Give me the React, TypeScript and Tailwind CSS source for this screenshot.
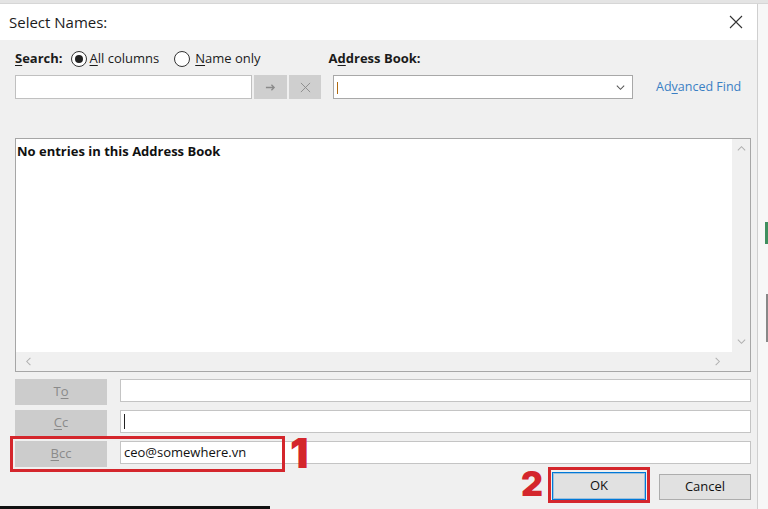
const ui = { fontFamily: '"Open Sans", "Noto Sans", sans-serif' };
const digit = { fontFamily: "Inter, Lato, sans-serif" };

const Chevron = ({ dir, className }: { dir: "up" | "down" | "left" | "right"; className?: string }) => {
  const d = {
    up: "M2 7 L6 3 L10 7",
    down: "M2 4 L6 8 L10 4",
    left: "M7 2 L3 6 L7 10",
    right: "M4 2 L8 6 L4 10",
  }[dir];
  return (
    <svg viewBox="0 0 12 12" className={className} fill="none" stroke="currentColor" strokeWidth="1.1">
      <path d={d} />
    </svg>
  );
};

const Radio = ({ checked }: { checked?: boolean }) => (
  <span className="w-[16px] h-[16px] rounded-full border border-[#333] bg-white flex items-center justify-center">
    {checked && <span className="w-[8px] h-[8px] rounded-full bg-[#222]" />}
  </span>
);

const RecipientRow = ({ label, pre, u, rest, value, cursor }: { label: string; pre?: string; u: string; rest?: string; value?: string; cursor?: boolean }) => (
  <div className="flex items-start h-[26px]" aria-label={label}>
    <div className="w-[92px] h-[26px] bg-[#cccccc] flex items-center justify-center text-[13px] text-[#8a8a8a]">
      {pre}
      <span className="underline underline-offset-2">{u}</span>
      {rest}
    </div>
    <div className="ml-[13px] w-[631px] h-[23px] bg-white border border-[#c4c4c4] flex items-center pl-[3px] text-[13px] text-[#111]">
      {cursor && <span className="w-px h-[15px] bg-[#222]" />}
      {value}
    </div>
  </div>
);

export default function App() {
  return (
    <div className="w-[768px] h-[509px] overflow-hidden bg-[#e9e9e9] flex flex-col relative" style={ui}>
      <div className="h-[4px] bg-[#e4e4e4] border-b border-[#d6d6d6]" />
      <div className="flex flex-1">
        <div className="w-[757px] flex flex-col bg-[#f0f0f0]">
          {/* title bar */}
          <div className="h-[36px] bg-white flex items-center justify-between pl-[9px] pr-[14px]">
            <span className="text-[15px] text-[#1b1b1b]">Select Names:</span>
            <svg viewBox="0 0 14 14" className="w-[14px] h-[14px] text-[#333]" stroke="currentColor" strokeWidth="1.1">
              <path d="M1 1 L13 13 M13 1 L1 13" />
            </svg>
          </div>

          <div className="pl-[15px] pr-[6px] flex flex-col">
            {/* row 1 */}
            <div className="mt-[10px] h-[17px] flex items-center text-[13px] text-[#1b1b1b] whitespace-nowrap">
              <span className="font-bold">
                <span className="underline underline-offset-2">S</span>earch:
              </span>
              <span className="ml-[8px]"><Radio checked /></span>
              <span className="ml-[3px]">
                <span className="underline underline-offset-2">A</span>ll columns
              </span>
              <span className="ml-[15px]"><Radio /></span>
              <span className="ml-[5px]">
                <span className="underline underline-offset-2">N</span>ame only
              </span>
              <span className="ml-[68px] font-bold">
                A<span className="underline underline-offset-2">d</span>dress Book:
              </span>
            </div>

            {/* row 2 */}
            <div className="mt-[8px] h-[24px] flex items-center">
              <div className="w-[237px] h-[24px] bg-white border border-[#c0c0c0]" />
              <div className="ml-[2px] w-[33px] h-[24px] bg-[#cfcfcf] flex items-center justify-center text-[#8a8a8a]">
                <svg viewBox="0 0 12 12" className="w-[11px] h-[11px]" fill="none" stroke="currentColor" strokeWidth="1.4">
                  <path d="M1 6 H10 M7 3 L10 6 L7 9" />
                </svg>
              </div>
              <div className="ml-[2px] w-[32px] h-[24px] bg-[#cfcfcf] flex items-center justify-center text-[#8a8a8a]">
                <svg viewBox="0 0 12 12" className="w-[11px] h-[11px]" stroke="currentColor" strokeWidth="1">
                  <path d="M1 1 L11 11 M11 1 L1 11" />
                </svg>
              </div>
              <div className="ml-[12px] w-[300px] h-[24px] bg-white border border-[#a8a8a8] flex items-center justify-between pl-[3px] pr-[6px]">
                <span className="w-px h-[12px] bg-[#b06a10] mt-[2px]" />
                <Chevron dir="down" className="w-[11px] h-[11px] text-[#555]" />
              </div>
              <span className="ml-[23px] text-[12.5px] text-[#3a7fc4] whitespace-nowrap">
                Ad<span className="underline underline-offset-2">v</span>anced Find
              </span>
            </div>

            {/* list */}
            <div className="mt-[39px] w-[736px] h-[234px] border border-[#a6a6a6] bg-[#f0f0f0] flex flex-col">
              <div className="flex flex-1">
                <div className="flex-1 bg-white px-[1px] pt-[3px] text-[13px] font-bold text-[#111]">
                  No entries in this Address Book
                </div>
                <div className="w-[18px] flex flex-col items-center justify-between py-[5px] text-[#b0b0b0]">
                  <Chevron dir="up" className="w-[11px] h-[11px]" />
                  <Chevron dir="down" className="w-[11px] h-[11px]" />
                </div>
              </div>
              <div className="h-[19px] flex items-center justify-between pl-[8px] pr-[27px] text-[#b0b0b0]">
                <Chevron dir="left" className="w-[11px] h-[11px]" />
                <Chevron dir="right" className="w-[11px] h-[11px]" />
              </div>
            </div>

            {/* recipients */}
            <div className="mt-[7px] flex flex-col gap-[5px]">
              <RecipientRow label="To" pre="T" u="o" />
              <RecipientRow label="Cc" u="C" rest="c" cursor />
              <RecipientRow label="Bcc" u="B" rest="cc" value="ceo@somewhere.vn" />
            </div>

            {/* buttons */}
            <div className="mt-[5px] h-[28px] flex items-end justify-end gap-[13px] text-[13px] text-[#111]">
              <button className="w-[94px] h-[28px] bg-[#e1e1e1] border border-[#0078d7] outline outline-1 -outline-offset-2 outline-[#0078d7]/30">OK</button>
              <button className="w-[92px] h-[26px] bg-[#e1e1e1] border border-[#adadad]">Cancel</button>
            </div>
          </div>

          <div className="flex-1" />
          <div className="h-[3px] flex items-end">
            <div className="w-[270px] h-[3px] bg-[#111]" />
          </div>
        </div>

        {/* behind-window strip */}
        <div className="flex-1 border-l border-[#cfcfcf] bg-[#f7f7f7] flex flex-col">
          <div className="mt-[218px] ml-auto w-[3px] h-[22px] bg-[#3f8f5f]" />
          <div className="mt-[50px] ml-auto w-[2px] h-[48px] bg-[#888]" />
        </div>
      </div>

      {/* annotations */}
      <div className="absolute left-[10px] top-[436px] w-[275px] h-[36px] border-[3px] border-[#d4262c]" />
      <span className="absolute left-[290px] top-[433px] text-[41px] leading-none font-black text-[#d4262c]" style={digit}>
        1
      </span>
      <div className="absolute left-[548px] top-[467px] w-[102px] h-[36px] border-[3px] border-[#d4262c]" />
      <span className="absolute left-[521px] top-[467px] text-[34px] leading-none font-black text-[#d4262c]" style={digit}>
        2
      </span>
    </div>
  );
}
